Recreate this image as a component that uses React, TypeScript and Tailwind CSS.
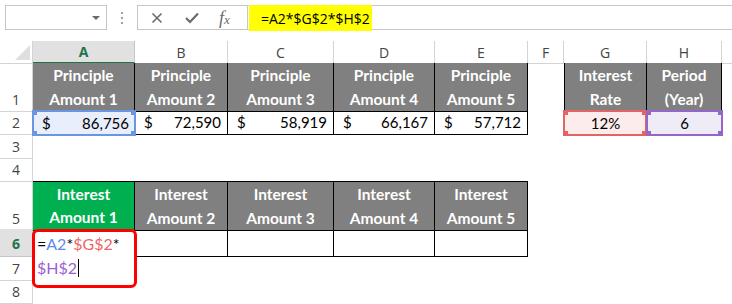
import React from "react";

const COLS = "grid grid-cols-[33px_102px_93px_106px_101px_93px_36px_83px_75px_1fr]";
const CELLFONT = "font-['Lato',sans-serif] text-[15px]";
const HEADFONT = "font-['Lato',sans-serif] text-[15.5px]";

function RowHead({ n, active }: { n: string; active?: boolean }) {
  return (
    <div
      className={
        active
          ? "flex items-end justify-center border-b border-r border-[#c6c6c6] bg-[#e1e1e1] text-[#217346] font-bold font-['Open_Sans',sans-serif] text-[14px] leading-[24px]"
          : "flex items-end justify-center border-b border-r border-[#d4d4d4] text-[#444] font-['Open_Sans',sans-serif] text-[14px] leading-[23px]"
      }
    >
      {n}
    </div>
  );
}

function GrayHead({ a, b, extra }: { a: string; b: string; extra?: string }) {
  return (
    <div
      className={
        "flex flex-col items-center justify-center bg-[#808080] text-white font-bold leading-[24px] border-r border-black " +
        HEADFONT +
        " " +
        (extra ?? "")
      }
    >
      <span>{a}</span>
      <span>{b}</span>
    </div>
  );
}

function Money({ v }: { v: string }) {
  return (
    <div className={"flex items-center justify-between pl-[9px] pr-[6px] border-r border-b border-black text-black " + CELLFONT}>
      <span>$</span>
      <span>{v}</span>
    </div>
  );
}

function Handles({ color }: { color: string }) {
  return (
    <>
      <div className="absolute -left-[2px] -top-[2px] w-[5px] h-[5px]" style={{ background: color }} />
      <div className="absolute -right-[2px] -top-[2px] w-[5px] h-[5px]" style={{ background: color }} />
      <div className="absolute -left-[2px] -bottom-[2px] w-[5px] h-[5px]" style={{ background: color }} />
      <div className="absolute -right-[2px] -bottom-[2px] w-[5px] h-[5px]" style={{ background: color }} />
    </>
  );
}

function ColHead({ l }: { l: string }) {
  return (
    <div className="flex items-center justify-center border-r border-b border-[#d4d4d4] text-[#444] font-['Open_Sans',sans-serif] text-[14px]">
      {l}
    </div>
  );
}

export default function App() {
  return (
    <div className="w-[732px] h-[304px] bg-white overflow-hidden relative select-none">
      {/* Formula bar */}
      <div className="flex items-start h-[41px] pt-[5px]">
        <div className="ml-[5px] w-[102px] h-[25px] border border-[#c6c6c6] flex items-center justify-end pr-[6px]">
          <svg width="8" height="4" viewBox="0 0 8 4">
            <path d="M0 0 L8 0 L4 4 Z" fill="#6b6b6b" />
          </svg>
        </div>
        <div className="w-[30px] h-[25px] flex flex-col items-center justify-center gap-[3px]">
          <div className="w-[2px] h-[2px] bg-[#a0a0a0]" />
          <div className="w-[2px] h-[2px] bg-[#a0a0a0]" />
          <div className="w-[2px] h-[2px] bg-[#a0a0a0]" />
        </div>
        <div className="w-[111px] h-[25px] border border-[#c6c6c6] flex items-center">
          <svg className="ml-[13px]" width="12" height="12" viewBox="0 0 12 12">
            <path d="M1.5 1.5 L10.5 10.5 M10.5 1.5 L1.5 10.5" stroke="#6b6b6b" strokeWidth="1.6" fill="none" />
          </svg>
          <svg className="ml-[22px]" width="14" height="12" viewBox="0 0 14 12">
            <path d="M1 6 L5 10 L13 1.5" stroke="#6b6b6b" strokeWidth="2.2" fill="none" />
          </svg>
          <span className="ml-[20px] font-['Liberation_Serif',serif] italic text-[#6b6b6b] text-[18px] leading-none">
            f<span className="text-[13px]">x</span>
          </span>
        </div>
        <div className="flex-1 h-[25px] border-t border-b border-[#c6c6c6] flex items-stretch">
          <div className="ml-[1px] w-[123px] h-[26px] -mt-[1px] bg-[#ffff00] flex items-center pl-[12px] font-['Open_Sans',sans-serif] text-[14px] text-black">
            =A2*$G$2*$H$2
          </div>
        </div>
      </div>

      {/* Column headers */}
      <div className={COLS + " h-[22px]"}>
        <div className="relative border-r border-b border-[#d4d4d4]">
          <svg className="absolute left-[15px] top-[4px]" width="15" height="15" viewBox="0 0 15 15">
            <path d="M15 0 L15 15 L0 15 Z" fill="#dfdfdf" />
          </svg>
        </div>
        <div className="flex items-center justify-center bg-[#e1e1e1] border-r border-[#c6c6c6] border-b-2 border-b-[#217346] text-[#217346] font-bold font-['Open_Sans',sans-serif] text-[14px]">
          A
        </div>
        <ColHead l="B" />
        <ColHead l="C" />
        <ColHead l="D" />
        <ColHead l="E" />
        <ColHead l="F" />
        <ColHead l="G" />
        <ColHead l="H" />
        <div className="border-b border-[#d4d4d4]" />
      </div>

      {/* Row 1 */}
      <div className={COLS + " h-[48px]"}>
        <RowHead n="1" />
        <GrayHead a="Principle" b="Amount 1" extra="border-b" />
        <GrayHead a="Principle" b="Amount 2" extra="border-b" />
        <GrayHead a="Principle" b="Amount 3" extra="border-b" />
        <GrayHead a="Principle" b="Amount 4" extra="border-b" />
        <GrayHead a="Principle" b="Amount 5" extra="border-b" />
        <div />
        <GrayHead a="Interest" b="Rate" extra="border-l border-b" />
        <GrayHead a="Period" b="(Year)" extra="border-b" />
        <div />
      </div>

      {/* Row 2 */}
      <div className={COLS + " h-[24px]"}>
        <RowHead n="2" />
        <div className={"relative flex items-center justify-between pl-[9px] pr-[6px] bg-[#e8eefb] text-black " + CELLFONT}>
          <div className="absolute -left-[1px] -top-[1px] -right-[1px] -bottom-[1px] border-2 border-[#6a95e2]">
            <Handles color="#6a95e2" />
          </div>
          <span>$</span>
          <span>86,756</span>
        </div>
        <Money v="72,590" />
        <Money v="58,919" />
        <Money v="66,167" />
        <Money v="57,712" />
        <div />
        <div className={"relative flex items-center justify-center bg-[#fcecec] text-black " + CELLFONT}>
          <div className="absolute -left-[1px] -top-[1px] right-0 -bottom-[1px] border-2 border-[#e36464]">
            <Handles color="#e36464" />
          </div>
          12%
        </div>
        <div className={"relative flex items-center justify-center bg-[#efecf8] text-black " + CELLFONT}>
          <div className="absolute -left-[1px] -top-[1px] -right-[1px] -bottom-[1px] border-2 border-[#9466c9]">
            <Handles color="#9466c9" />
          </div>
          6
        </div>
        <div />
      </div>

      {/* Rows 3,4 */}
      <div className={COLS + " h-[23px]"}>
        <RowHead n="3" />
      </div>
      <div className={COLS + " h-[23px]"}>
        <RowHead n="4" />
      </div>

      {/* Row 5 */}
      <div className={COLS + " h-[48px]"}>
        <RowHead n="5" />
        <div className={"flex flex-col items-center justify-center bg-[#00b050] text-white font-bold leading-[23px] border-t border-r border-b border-black " + HEADFONT}>
          <span>Interest</span>
          <span>Amount 1</span>
        </div>
        <GrayHead a="Interest" b="Amount 2" extra="border-t border-b leading-[23px]" />
        <GrayHead a="Interest" b="Amount 3" extra="border-t border-b leading-[23px]" />
        <GrayHead a="Interest" b="Amount 4" extra="border-t border-b leading-[23px]" />
        <GrayHead a="Interest" b="Amount 5" extra="border-t border-b leading-[23px]" />
      </div>

      {/* Row 6 */}
      <div className={COLS + " h-[28px]"}>
        <RowHead n="6" active />
        <div className="relative border-r border-b border-black">
          <div className="absolute -left-[1px] top-0 w-[105px] h-[59px] z-10 bg-white border-[3px] border-[#ff0000] rounded-[6px] pl-[2px] font-['Lato',sans-serif] text-[16px] leading-[24px]">
            <div>
              <span className="text-black">=</span>
              <span className="text-[#5a8de6]">A2</span>
              <span className="text-black">*</span>
              <span className="text-[#f06464]">$G$2</span>
              <span className="text-black">*</span>
            </div>
            <div className="flex items-center">
              <span className="text-[#9b5fd0]">$H$2</span>
              <span className="ml-[1px] w-px h-[18px] bg-black" />
            </div>
          </div>
        </div>
        <div className="border-r border-b border-black" />
        <div className="border-r border-b border-black" />
        <div className="border-r border-b border-black" />
        <div className="border-r border-b border-black" />
      </div>

      {/* Rows 7, 8 */}
      <div className={COLS + " h-[23px]"}>
        <RowHead n="7" />
      </div>
      <div className={COLS + " h-[23px]"}>
        <RowHead n="8" />
      </div>
    </div>
  );
}
